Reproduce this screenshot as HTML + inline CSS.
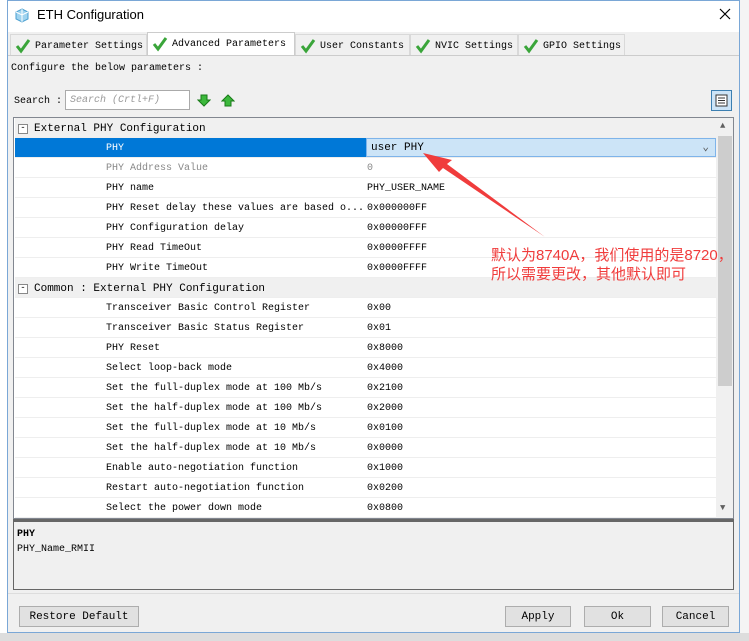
<!DOCTYPE html><html><head><meta charset="utf-8"><style>
body{margin:0;width:749px;height:641px;background:#fff;position:relative;overflow:hidden;font-family:"Liberation Mono",monospace;font-size:10px;color:#000}
.a{position:absolute}
.dlg{left:7px;top:0;width:733px;height:633px;background:#f0f0f0;border:1px solid #7aa7d6;box-sizing:border-box}
.tab{position:absolute;top:34px;height:21px;background:#f0f0f0;border:1px solid #d9d9d9;border-bottom:none;box-sizing:border-box;line-height:23px;padding-left:24px;white-space:nowrap}
.tab svg{position:absolute;left:4px;top:3px}
.row{position:absolute;left:15px;width:701px;height:20px;border-bottom:1px solid #eee;box-sizing:border-box;background:#fff;line-height:22px}
.row .k{position:absolute;left:91px}.row .v{position:absolute;left:352px}
.grp{background:#f0f0f0}
.btn{position:absolute;top:606px;height:21px;background:#e1e1e1;border:1px solid #adadad;box-sizing:border-box;text-align:center;line-height:21px;font-size:11px}
</style></head><body>
<div class="a" style="left:740px;top:0;width:9px;height:641px;background:#f4f4f4"></div>
<div class="a" style="left:0;top:633px;width:749px;height:8px;background:#ddd"></div>
<div class="a dlg"></div>
<div class="a" style="left:8px;top:1px;width:731px;height:31px;background:#fff"></div>
<svg class="a" style="left:15px;top:8px" width="14" height="15"><path d="M7 1L13 4V11L7 14L1 11V4Z" fill="#9fd3ef" stroke="#4a9fd0"/><path d="M7 1V14M1 4L7 7L13 4" stroke="#fff" fill="none"/></svg>
<div class="a" style="left:37px;top:7px;font-family:'Liberation Sans',sans-serif;font-size:13px">ETH Configuration</div>
<svg class="a" style="left:719px;top:8px" width="12" height="12"><path d="M1 1L11 11M11 1L1 11" stroke="#000" stroke-width="1.2"/></svg>
<div class="tab" style="left:10px;width:137px">Parameter Settings<svg width="16" height="16"><path d="M2 8L6 13L14 2" stroke="#3aa53a" stroke-width="3" fill="none"/></svg></div>
<div class="tab" style="left:147px;top:32px;height:24px;width:148px;background:#fff;border-color:#ccc">Advanced Parameters<svg width="16" height="16"><path d="M2 8L6 13L14 2" stroke="#3aa53a" stroke-width="3" fill="none"/></svg></div>
<div class="tab" style="left:295px;width:115px">User Constants<svg width="16" height="16"><path d="M2 8L6 13L14 2" stroke="#3aa53a" stroke-width="3" fill="none"/></svg></div>
<div class="tab" style="left:410px;width:108px">NVIC Settings<svg width="16" height="16"><path d="M2 8L6 13L14 2" stroke="#3aa53a" stroke-width="3" fill="none"/></svg></div>
<div class="tab" style="left:518px;width:107px">GPIO Settings<svg width="16" height="16"><path d="M2 8L6 13L14 2" stroke="#3aa53a" stroke-width="3" fill="none"/></svg></div>
<div class="a" style="left:8px;top:55px;width:731px;height:1px;background:#ccc"></div>
<div class="a" style="left:11px;top:63px">Configure the below parameters :</div>
<div class="a" style="left:14px;top:96px">Search :</div>
<div class="a" style="left:65px;top:90px;width:125px;height:20px;background:#fff;border:1px solid #aaa;box-sizing:border-box;color:#999;font-style:italic;line-height:19px;padding-left:4px">Search (Crtl+F)</div>
<svg class="a" style="left:197px;top:94px" width="14" height="13"><path d="M4 1H10V6H13L7 12L1 6H4Z" fill="#3cb83c" stroke="#197a19"/></svg>
<svg class="a" style="left:221px;top:94px" width="14" height="13"><path d="M4 12H10V7H13L7 1L1 7H4Z" fill="#3cb83c" stroke="#197a19"/></svg>
<div class="a" style="left:711px;top:90px;width:21px;height:21px;background:#cce4f7;border:1px solid #3c7fb1;box-sizing:border-box"></div>
<svg class="a" style="left:715px;top:94px" width="13" height="13"><rect x="1" y="1" width="11" height="11" fill="#fff" stroke="#333"/><path d="M3 4H10M3 6.5H10M3 9H10" stroke="#333"/></svg>
<div class="a" style="left:13px;top:117px;width:721px;height:402px;border:1px solid #828790;background:#fff;box-sizing:border-box"></div>
<div class="a" style="left:716px;top:118px;width:17px;height:400px;background:#f0f0f0"></div>
<div class="a" style="left:718px;top:136px;width:14px;height:250px;background:#cdcdcd"></div>
<div class="a" style="left:720px;top:121px;font-size:9px;color:#606060">▲</div>
<div class="a" style="left:720px;top:503px;font-size:9px;color:#606060">▼</div>
<div class="row grp" style="top:118px"><span style="position:absolute;left:3px;top:6px;width:8px;height:8px;border:1px solid #888;line-height:7px;text-align:center;font-size:9px;background:#fff">-</span><span style="position:absolute;left:19px;font-size:11px">External PHY Configuration</span></div>
<div class="row" style="top:138px;background:#0078d7;color:#fff"><span class="k">PHY</span><div style="position:absolute;left:351px;top:0;width:350px;height:19px;background:#cce4f7;border:1px solid #7eb4ea;box-sizing:border-box;color:#000;padding-left:4px;line-height:19px;font-size:11px">user PHY<span style="position:absolute;right:6px;color:#555">⌄</span></div></div>
<div class="row" style="top:158px;color:#888"><span class="k">PHY Address Value</span><span class="v">0</span></div>
<div class="row" style="top:178px"><span class="k">PHY name</span><span class="v">PHY_USER_NAME</span></div>
<div class="row" style="top:198px"><span class="k">PHY Reset delay these values are based o...</span><span class="v">0x000000FF</span></div>
<div class="row" style="top:218px"><span class="k">PHY Configuration delay</span><span class="v">0x00000FFF</span></div>
<div class="row" style="top:238px"><span class="k">PHY Read TimeOut</span><span class="v">0x0000FFFF</span></div>
<div class="row" style="top:258px"><span class="k">PHY Write TimeOut</span><span class="v">0x0000FFFF</span></div>
<div class="row grp" style="top:278px"><span style="position:absolute;left:3px;top:6px;width:8px;height:8px;border:1px solid #888;line-height:7px;text-align:center;font-size:9px;background:#fff">-</span><span style="position:absolute;left:19px;font-size:11px">Common : External PHY Configuration</span></div>
<div class="row" style="top:298px"><span class="k">Transceiver Basic Control Register</span><span class="v">0x00</span></div>
<div class="row" style="top:318px"><span class="k">Transceiver Basic Status Register</span><span class="v">0x01</span></div>
<div class="row" style="top:338px"><span class="k">PHY Reset</span><span class="v">0x8000</span></div>
<div class="row" style="top:358px"><span class="k">Select loop-back mode</span><span class="v">0x4000</span></div>
<div class="row" style="top:378px"><span class="k">Set the full-duplex mode at 100 Mb/s</span><span class="v">0x2100</span></div>
<div class="row" style="top:398px"><span class="k">Set the half-duplex mode at 100 Mb/s</span><span class="v">0x2000</span></div>
<div class="row" style="top:418px"><span class="k">Set the full-duplex mode at 10 Mb/s</span><span class="v">0x0100</span></div>
<div class="row" style="top:438px"><span class="k">Set the half-duplex mode at 10 Mb/s</span><span class="v">0x0000</span></div>
<div class="row" style="top:458px"><span class="k">Enable auto-negotiation function</span><span class="v">0x1000</span></div>
<div class="row" style="top:478px"><span class="k">Restart auto-negotiation function</span><span class="v">0x0200</span></div>
<div class="row" style="top:498px;height:20px"><span class="k">Select the power down mode</span><span class="v">0x0800</span></div>
<div class="a" style="left:13px;top:519px;width:721px;height:71px;border:1px solid #666;border-top:3px solid #666;box-sizing:border-box"></div>
<div class="a" style="left:17px;top:529px;font-weight:bold">PHY</div>
<div class="a" style="left:17px;top:544px">PHY_Name_RMII</div>
<div class="a" style="left:8px;top:593px;width:731px;height:1px;background:#ddd"></div>
<div class="btn" style="left:19px;width:120px">Restore Default</div>
<div class="btn" style="left:505px;width:66px">Apply</div>
<div class="btn" style="left:584px;width:67px">Ok</div>
<div class="btn" style="left:662px;width:67px">Cancel</div>
<svg class="a" style="left:0;top:0" width="749" height="641"><path d="M423 153L452 160L447 164L545 237L443 168L439 172Z" fill="#f03c3c"/></svg>
<div class="a" style="left:491px;top:246px;color:#f03c3c;font-family:'Liberation Sans','Noto Sans CJK SC',sans-serif;font-size:15px;line-height:19px;white-space:nowrap">默认为8740A，我们使用的是8720，<br>所以需要更改，其他默认即可</div>
</body></html>
